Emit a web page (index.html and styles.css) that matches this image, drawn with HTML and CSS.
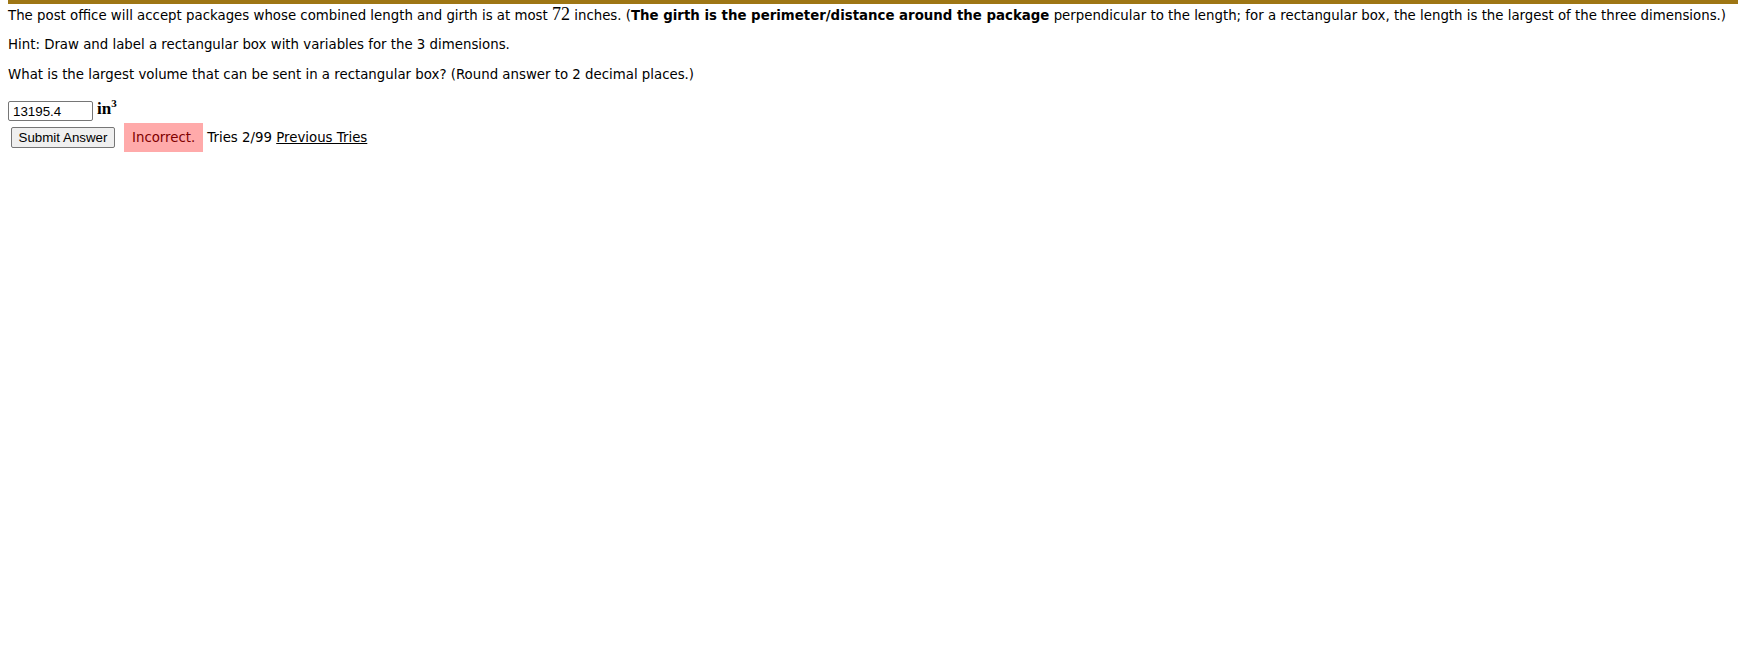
FILE: index.html
```html
<!DOCTYPE html>
<html>
<head>
<meta charset="utf-8">
<link rel="stylesheet" href="styles.css">
</head>
<body>
<div class="problem">
  <p class="line first">The post office will accept packages whose combined length and girth is at most <span class="math">72</span> inches. (<b>The girth is the perimeter/distance around the package</b> perpendicular to the length; for a rectangular box, the length is the largest of the three dimensions.)</p>
  <p class="line">Hint: Draw and label a rectangular box with variables for the 3 dimensions.</p>
  <p class="line">What is the largest volume that can be sent in a rectangular box? (Round answer to 2 decimal places.)</p>
  <div class="answer-row">
    <input class="answer" type="text" value="13195.4">
    <span class="unit">in<sup>3</sup></span>
  </div>
  <div class="submit-row">
    <button class="submit">Submit Answer</button>
    <span class="result">Incorrect.</span>
    <span class="tries">Tries 2/99 <a href="#" class="prev">Previous Tries</a></span>
  </div>
</div>
</body>
</html>
```
FILE: styles.css
```css
html, body {
  margin: 0;
  padding: 0;
  background: #fff;
}
body {
  padding: 0 0 0 8px;
  font-family: "DejaVu Sans", Verdana, sans-serif;
  font-size: 13.33px;
  color: #000;
}
.problem {
  border-top: 4px solid #9e7614;
  width: max-content;
  min-width: 100%;
}
.line {
  margin: 0;
  white-space: nowrap;
  line-height: 16px;
}
.first {
  padding-top: 4px;
}
.line + .line {
  margin-top: 14px;
}
.line.first + .line {
  margin-top: 13px;
}
.math {
  font-family: "Liberation Serif", "Times New Roman", serif;
  font-size: 18px;
  line-height: 0;
}
.answer-row {
  display: flex;
  align-items: flex-start;
  gap: 4px;
  margin-top: 18px;
  height: 22px;
}
.answer {
  width: 85px;
  height: 20px;
  box-sizing: border-box;
  border: 1px solid #767676;
  border-radius: 2px;
  padding: 1px 4px;
  font-family: "Liberation Sans", Arial, sans-serif;
  font-size: 13.33px;
  margin: 0;
  color: #000;
}
.unit {
  font-family: "Liberation Serif", "Times New Roman", serif;
  font-weight: bold;
  font-size: 17px;
  line-height: 17px;
  margin-top: -1px;
}
.unit sup {
  font-size: 11px;
  line-height: 0;
  vertical-align: 7px;
}
.submit-row {
  display: flex;
  align-items: center;
  height: 29px;
}
.submit {
  font-family: "Liberation Sans", Arial, sans-serif;
  font-size: 13.33px;
  height: 21px;
  width: 104px;
  margin: 0 0 0 3px;
  padding: 0;
  border: 1px solid #767676;
  border-radius: 2px;
  background: #efefef;
  color: #000;
}
.result {
  display: block;
  background: #ffaaaa;
  color: #800000;
  margin-left: 9px;
  height: 29px;
  line-height: 29px;
  padding: 0 8px;
}
.tries {
  margin-left: 4px;
}
.prev {
  color: #000;
}
```
